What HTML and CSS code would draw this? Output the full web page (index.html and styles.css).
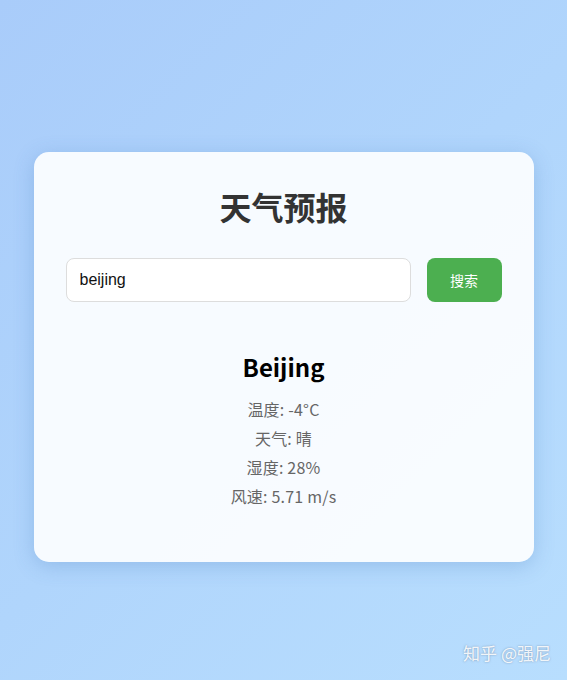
FILE: index.html
```html
<!DOCTYPE html>
<html lang="zh">
<head>
<meta charset="utf-8">
<title>天气预报</title>
<link rel="stylesheet" href="styles.css">
</head>
<body>
<div class="page">
  <div class="card">
    <h1 class="title">天气预报</h1>
    <div class="search">
      <input class="city-input" type="text" value="beijing">
      <button class="search-btn">搜索</button>
    </div>
    <div class="weather">
      <h2 class="city">Beijing</h2>
      <p class="line">温度: -4°C</p>
      <p class="line">天气: 晴</p>
      <p class="line">湿度: 28%</p>
      <p class="line">风速: 5.71 m/s</p>
    </div>
  </div>
  <div class="watermark">知乎 @强尼</div>
</div>
</body>
</html>
```
FILE: styles.css
```css
html, body {
  margin: 0;
  padding: 0;
}
body {
  font-family: "Noto Sans CJK SC", "Noto Sans", sans-serif;
  background: linear-gradient(135deg, #a9ccfa 0%, #b0d5fc 50%, #b8defe 100%);
  min-height: 680px;
}
.page {
  position: relative;
  height: 680px;
  padding-top: 152px;
  box-sizing: border-box;
}
.card {
  width: 500px;
  margin: 0 auto;
  box-sizing: border-box;
  height: 410px;
  padding: 32px 32px;
  background: rgba(255, 255, 255, 0.9);
  border-radius: 15px;
  box-shadow: 0 4px 20px rgba(60, 110, 180, 0.25);
  text-align: center;
}
.title {
  margin: 0 0 30px;
  font-size: 32px;
  line-height: 44px;
  font-weight: 700;
  color: #333;
}
.search {
  display: flex;
  gap: 16px;
}
.city-input {
  flex: 1;
  height: 44px;
  box-sizing: border-box;
  padding: 0 13px;
  border: 1px solid #ddd;
  border-radius: 8px;
  font-family: "Liberation Sans", Arial, sans-serif;
  font-size: 16px;
  color: #111;
  background: #fff;
  outline: none;
}
.search-btn {
  width: 75px;
  height: 44px;
  border: none;
  border-radius: 8px;
  background: #4caf50;
  color: #fff;
  font-family: "Noto Sans CJK SC", sans-serif;
  font-size: 14px;
  cursor: pointer;
}
.weather {
  margin-top: 48px;
}
.city {
  margin: 0 0 11px;
  font-size: 24px;
  line-height: 34px;
  font-weight: 700;
  color: #000;
}
.line {
  margin: 0;
  font-size: 16px;
  line-height: 29px;
  color: #666;
  letter-spacing: 0.2px;
}
.watermark {
  position: absolute;
  right: 16px;
  bottom: 15px;
  font-size: 17px;
  color: rgba(255, 255, 255, 0.9);
  text-shadow: 0 0 2px rgba(80, 100, 130, 0.6);
}
```
